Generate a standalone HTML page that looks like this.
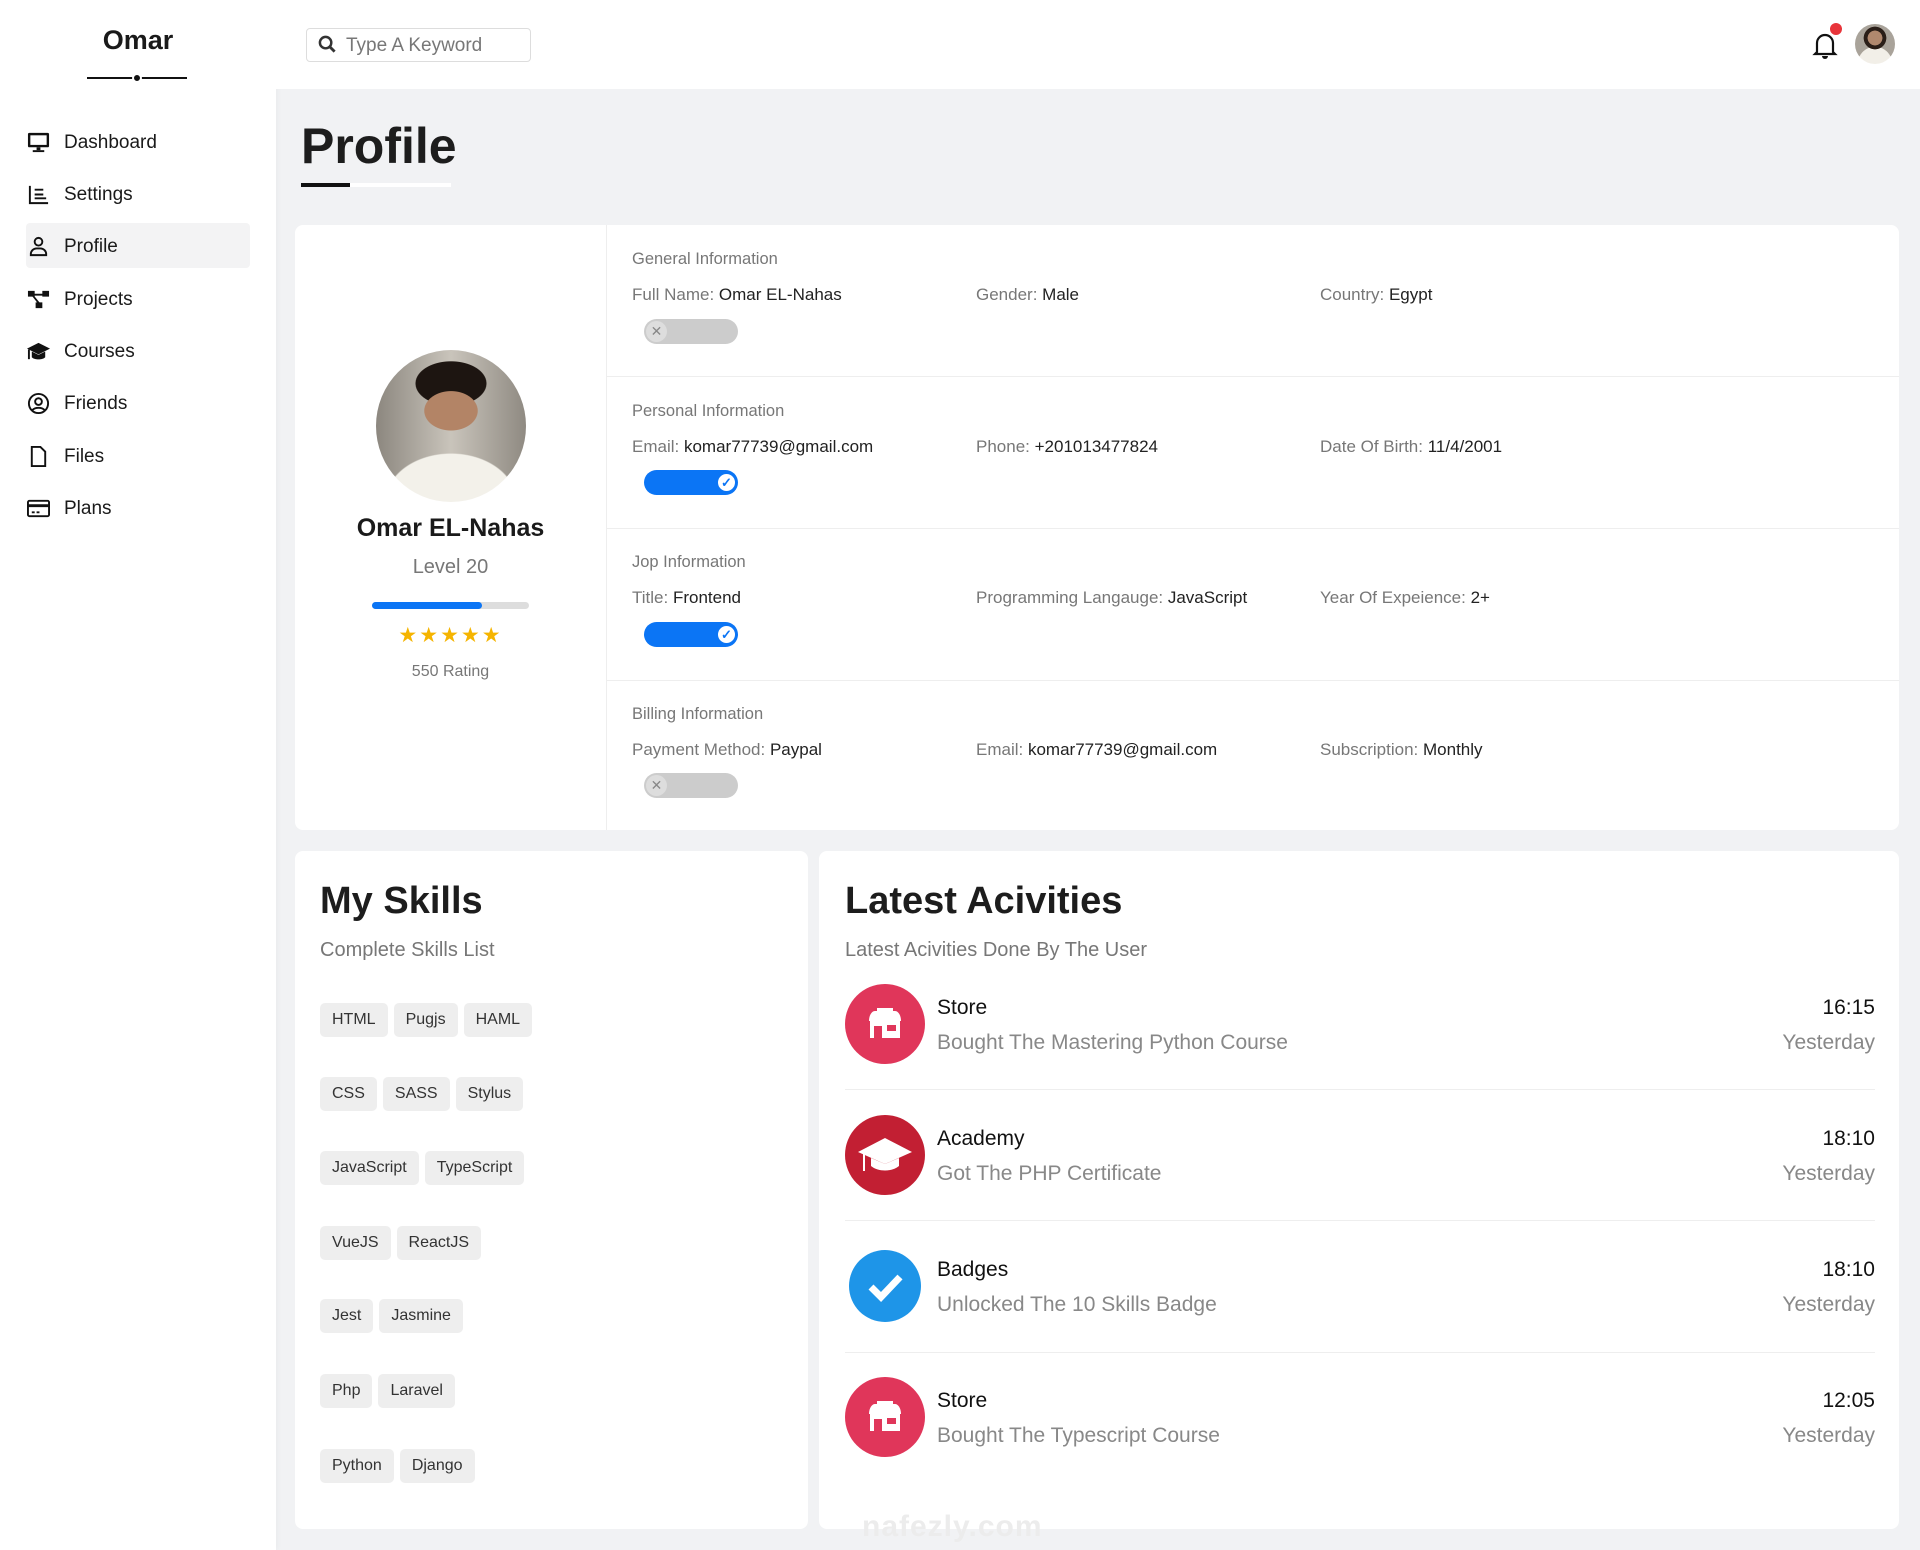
<!DOCTYPE html>
<html><head><meta charset="utf-8">
<style>
*{box-sizing:border-box;margin:0;padding:0}
body{width:1920px;height:1550px;background:#f1f2f4;font-family:"Liberation Sans",sans-serif;color:#1a1a1a;position:relative;overflow:hidden}
.abs{position:absolute}
.side{left:0;top:0;width:276px;height:1550px;background:#fff;box-shadow:1px 0 6px rgba(0,0,0,.04)}
.logo{left:0;width:276px;top:25px;text-align:center;font-size:27px;font-weight:600}
.nav{left:26px;width:224px;height:45px;display:flex;align-items:center;font-size:19px;border-radius:4px;padding-top:2px}
.nav svg{width:23px;height:23px;margin:0 14px 0 1px}
.nav.act{background:#f3f3f4}
.header{left:276px;top:0;width:1644px;height:89px;background:#fff}
.search{left:306px;top:28px;width:225px;height:34px;border:1.5px solid #ddd;border-radius:4px;font-size:19px;color:#777;padding:6px 0 0 39px}
.card{background:#fff;border-radius:8px}
.lbl{color:#777}
.sec{font-size:16.5px;color:#777}
.f{font-size:17px;color:#222}
.tg{width:94px;height:25px;border-radius:13px}
.tg.off{background:#ccc}
.tg.on{background:#0b75f5}
.tag{display:inline-block;background:#eee;border-radius:5px;height:34px;line-height:34px;padding:0 12px;font-size:16px;color:#333;margin-right:6px}
.row{left:320px;height:34px;white-space:nowrap}
.it{left:845px;width:1030px}
.ic{position:absolute;left:0;width:80px;height:80px;border-radius:50%}
.t1{position:absolute;left:92px;font-size:21px;color:#111}
.t2{position:absolute;left:92px;font-size:21px;color:#888}
.r1{position:absolute;right:0;font-size:21px;color:#111}
.r2{position:absolute;right:0;font-size:21px;color:#888}
.hr{height:1px;background:#eee;left:845px;width:1030px}
</style></head><body>
<div class="abs side"></div>
<div class="abs logo">Omar</div>
<div class="abs" style="left:87px;top:77px;width:100px;height:2px;background:#111"></div>
<div class="abs" style="left:132px;top:73px;width:10px;height:10px;border-radius:50%;background:#111;border:2px solid #fff"></div>

<div class="abs nav" style="top:119px"><svg viewBox="0 0 24 24"><rect x="1" y="2" width="22" height="15" rx="1.5" fill="#111"/><rect x="3.5" y="4.5" width="17" height="10" fill="#fff"/><rect x="10" y="17" width="4" height="3" fill="#111"/><rect x="6" y="20" width="12" height="2" fill="#111"/></svg>Dashboard</div>
<div class="abs nav" style="top:171px"><svg viewBox="0 0 24 24" fill="none" stroke="#111" stroke-width="2"><path d="M3 3v18h19M8 7h9M8 12h9M8 16h12"/></svg>Settings</div>
<div class="abs nav act" style="top:223px"><svg viewBox="0 0 24 24" fill="none" stroke="#111" stroke-width="2"><circle cx="12" cy="7" r="4"/><path d="M4 21v-1a6 6 0 0 1 6-6h4a6 6 0 0 1 6 6v1z"/></svg>Profile</div>
<div class="abs nav" style="top:276px"><svg viewBox="0 0 24 24" fill="#111"><rect x="1" y="3" width="7" height="6"/><rect x="16" y="3" width="7" height="6"/><rect x="9" y="15" width="7" height="6"/><path d="M7 6h10v2H7zM5 8l7 9 1.5-1.3L6.5 7z"/></svg>Projects</div>
<div class="abs nav" style="top:328px"><svg viewBox="0 0 24 24" fill="#111"><path d="M12 3L0 9l12 6 12-6z"/><path d="M5 12v6c3 3 11 3 14 0v-6l-7 3.5z"/><rect x="1" y="10" width="2" height="10"/></svg>Courses</div>
<div class="abs nav" style="top:380px"><svg viewBox="0 0 24 24" fill="none" stroke="#111" stroke-width="2"><circle cx="12" cy="12" r="10"/><circle cx="12" cy="10" r="3.5"/><path d="M5.5 19a8 6 0 0 1 13 0"/></svg>Friends</div>
<div class="abs nav" style="top:433px"><svg viewBox="0 0 24 24" fill="none" stroke="#111" stroke-width="2"><path d="M5 2h9l5 5v15H5z"/></svg>Files</div>
<div class="abs nav" style="top:485px"><svg viewBox="0 0 24 24" fill="none" stroke="#111" stroke-width="2"><rect x="1" y="4" width="22" height="16" rx="1.5"/><path d="M1 9h22" stroke-width="3"/><path d="M5 16h3M10 16h3"/></svg>Plans</div>

<div class="abs header"></div>
<div class="abs search">Type A Keyword</div>
<svg class="abs" style="left:318px;top:35px" width="19" height="19" viewBox="0 0 20 20"><circle cx="8" cy="8" r="6" fill="none" stroke="#333" stroke-width="2.6"/><path d="M12.5 12.5l5 5" stroke="#333" stroke-width="3"/></svg>
<svg class="abs" style="left:1812px;top:30px" width="26" height="30" viewBox="0 0 26 30"><path d="M5 22V13a8 8 0 0 1 16 0v9l2 2H3z" fill="none" stroke="#111" stroke-width="2.2"/><path d="M10 26a3 3 0 0 0 6 0z" fill="#111"/></svg>
<div class="abs" style="left:1830px;top:23px;width:12px;height:12px;border-radius:50%;background:#e8343a"></div>
<div class="abs" style="left:1855px;top:24px;width:40px;height:40px;border-radius:50%;background:radial-gradient(circle at 50% 35%,#b0886e 0 22%,#2a1e18 23% 34%,transparent 35%),radial-gradient(circle at 50% 100%,#f2efe8 0 38%,#a9a39a 39%)"></div>

<div class="abs" style="left:301px;top:117px;font-size:50px;font-weight:700;color:#1d1d1d">Profile</div>
<div class="abs" style="left:301px;top:183px;width:150px;height:4px;background:#fff"></div>
<div class="abs" style="left:301px;top:183px;width:49px;height:4px;background:#111"></div>

<div class="abs card" style="left:295px;top:225px;width:1604px;height:605px"></div>
<div class="abs" style="left:606px;top:225px;width:1px;height:605px;background:#eee"></div>
<div class="abs" style="left:376px;top:350px;width:150px;height:152px;border-radius:50%;background:radial-gradient(ellipse 22% 16% at 50% 40%,#b38466 0 80%,transparent 82%),radial-gradient(ellipse 26% 16% at 50% 22%,#1d1511 0 90%,transparent 92%),radial-gradient(ellipse 48% 35% at 50% 100%,#f3f1ea 0 90%,transparent 92%),linear-gradient(90deg,#8c877f,#c9c4bb 50%,#8f8a82)"></div>
<div class="abs" style="left:295px;top:514px;width:311px;text-align:center;font-size:25px;font-weight:600">Omar EL-Nahas</div>
<div class="abs" style="left:295px;top:556px;width:311px;text-align:center;font-size:20px;color:#777">Level 20</div>
<div class="abs" style="left:372px;top:602px;width:157px;height:7px;border-radius:4px;background:#ddd"></div>
<div class="abs" style="left:372px;top:602px;width:110px;height:7px;border-radius:4px;background:#0b75f5"></div>
<div class="abs" style="left:295px;top:623px;width:311px;text-align:center;font-size:21px;color:#f5b400;letter-spacing:2px">★★★★★</div>
<div class="abs" style="left:295px;top:663px;width:311px;text-align:center;font-size:16px;color:#777">550 Rating</div>

<div class="abs hr" style="left:607px;width:1292px;top:376px"></div>
<div class="abs hr" style="left:607px;width:1292px;top:528px"></div>
<div class="abs hr" style="left:607px;width:1292px;top:680px"></div>

<div class="abs sec" style="left:632px;top:250px">General Information</div>
<div class="abs f" style="left:632px;top:285px"><span class="lbl">Full Name:</span> Omar EL-Nahas</div>
<div class="abs f" style="left:976px;top:285px"><span class="lbl">Gender:</span> Male</div>
<div class="abs f" style="left:1320px;top:285px"><span class="lbl">Country:</span> Egypt</div>
<div class="abs tg off" style="left:644px;top:319px"></div>
<div class="abs" style="left:646px;top:321px;width:21px;height:21px;border-radius:50%;background:#ddd;color:#888;font-size:14px;text-align:center;line-height:21px">✕</div>

<div class="abs sec" style="left:632px;top:402px">Personal Information</div>
<div class="abs f" style="left:632px;top:437px"><span class="lbl">Email:</span> komar77739@gmail.com</div>
<div class="abs f" style="left:976px;top:437px"><span class="lbl">Phone:</span> +201013477824</div>
<div class="abs f" style="left:1320px;top:437px"><span class="lbl">Date Of Birth:</span> 11/4/2001</div>
<div class="abs tg on" style="left:644px;top:470px"></div>
<div class="abs" style="left:716px;top:472px;width:21px;height:21px;border-radius:50%;background:#fff;border:2px solid #0b75f5;color:#0b75f5;font-size:13px;text-align:center;line-height:17px;font-weight:700">✓</div>

<div class="abs sec" style="left:632px;top:553px">Jop Information</div>
<div class="abs f" style="left:632px;top:588px"><span class="lbl">Title:</span> Frontend</div>
<div class="abs f" style="left:976px;top:588px"><span class="lbl">Programming Langauge:</span> JavaScript</div>
<div class="abs f" style="left:1320px;top:588px"><span class="lbl">Year Of Expeience:</span> 2+</div>
<div class="abs tg on" style="left:644px;top:622px"></div>
<div class="abs" style="left:716px;top:624px;width:21px;height:21px;border-radius:50%;background:#fff;border:2px solid #0b75f5;color:#0b75f5;font-size:13px;text-align:center;line-height:17px;font-weight:700">✓</div>

<div class="abs sec" style="left:632px;top:705px">Billing Information</div>
<div class="abs f" style="left:632px;top:740px"><span class="lbl">Payment Method:</span> Paypal</div>
<div class="abs f" style="left:976px;top:740px"><span class="lbl">Email:</span> komar77739@gmail.com</div>
<div class="abs f" style="left:1320px;top:740px"><span class="lbl">Subscription:</span> Monthly</div>
<div class="abs tg off" style="left:644px;top:773px"></div>
<div class="abs" style="left:646px;top:775px;width:21px;height:21px;border-radius:50%;background:#ddd;color:#888;font-size:14px;text-align:center;line-height:21px">✕</div>

<div class="abs card" style="left:295px;top:851px;width:513px;height:678px"></div>
<div class="abs" style="left:320px;top:880px;font-size:38px;font-weight:700;color:#1d1d1d">My Skills</div>
<div class="abs" style="left:320px;top:939px;font-size:20px;color:#777">Complete Skills List</div>
<div class="abs row" style="top:1003px"><span class="tag">HTML</span><span class="tag">Pugjs</span><span class="tag">HAML</span></div>
<div class="abs row" style="top:1077px"><span class="tag">CSS</span><span class="tag">SASS</span><span class="tag">Stylus</span></div>
<div class="abs row" style="top:1151px"><span class="tag">JavaScript</span><span class="tag">TypeScript</span></div>
<div class="abs row" style="top:1226px"><span class="tag">VueJS</span><span class="tag">ReactJS</span></div>
<div class="abs row" style="top:1299px"><span class="tag">Jest</span><span class="tag">Jasmine</span></div>
<div class="abs row" style="top:1374px"><span class="tag">Php</span><span class="tag">Laravel</span></div>
<div class="abs row" style="top:1449px"><span class="tag">Python</span><span class="tag">Django</span></div>

<div class="abs card" style="left:819px;top:851px;width:1080px;height:678px"></div>
<div class="abs" style="left:845px;top:880px;font-size:38px;font-weight:700;color:#1d1d1d">Latest Acivities</div>
<div class="abs" style="left:845px;top:939px;font-size:20px;color:#777">Latest Acivities Done By The User</div>

<div class="abs it" style="top:984px;height:80px">
 <div class="ic" style="background:#e0365a"><svg width="80" height="80" viewBox="0 0 80 80"><path d="M25 36v18h30V36z" fill="#fff"/><rect x="29" y="42" width="8" height="12" fill="#e0365a"/><rect x="42" y="41" width="9" height="6" fill="#e0365a"/><path d="M24 37c0-6 3-10 6-10h20c3 0 6 4 6 10z" fill="#fff"/><rect x="32" y="24" width="16" height="4" fill="#fff"/></svg></div>
 <div class="t1" style="top:12px">Store</div><div class="t2" style="top:47px">Bought The Mastering Python Course</div>
 <div class="r1" style="top:12px">16:15</div><div class="r2" style="top:47px">Yesterday</div>
</div>
<div class="abs hr" style="top:1089px"></div>
<div class="abs it" style="top:1115px;height:80px">
 <div class="ic" style="background:#c21f33"><svg width="80" height="80" viewBox="0 0 80 80"><path d="M13 37l27-14 27 14-27 12z" fill="#fff"/><path d="M26 43v8c7 6 21 6 28 0v-8l-14 6z" fill="#fff"/><rect x="18" y="38" width="2" height="18" fill="#fff"/></svg></div>
 <div class="t1" style="top:12px">Academy</div><div class="t2" style="top:47px">Got The PHP Certificate</div>
 <div class="r1" style="top:12px">18:10</div><div class="r2" style="top:47px">Yesterday</div>
</div>
<div class="abs hr" style="top:1220px"></div>
<div class="abs it" style="top:1246px;height:80px">
 <div class="ic" style="background:#1e95e8;width:72px;height:72px;left:4px;top:4px"><svg width="72" height="72" viewBox="0 0 72 72"><path d="M22 37l10 10 19-20" fill="none" stroke="#fff" stroke-width="7"/></svg></div>
 <div class="t1" style="top:12px">Badges</div><div class="t2" style="top:47px">Unlocked The 10 Skills Badge</div>
 <div class="r1" style="top:12px">18:10</div><div class="r2" style="top:47px">Yesterday</div>
</div>
<div class="abs hr" style="top:1352px"></div>
<div class="abs it" style="top:1377px;height:80px">
 <div class="ic" style="background:#e0365a"><svg width="80" height="80" viewBox="0 0 80 80"><path d="M25 36v18h30V36z" fill="#fff"/><rect x="29" y="42" width="8" height="12" fill="#e0365a"/><rect x="42" y="41" width="9" height="6" fill="#e0365a"/><path d="M24 37c0-6 3-10 6-10h20c3 0 6 4 6 10z" fill="#fff"/><rect x="32" y="24" width="16" height="4" fill="#fff"/></svg></div>
 <div class="t1" style="top:12px">Store</div><div class="t2" style="top:47px">Bought The Typescript Course</div>
 <div class="r1" style="top:12px">12:05</div><div class="r2" style="top:47px">Yesterday</div>
</div>
<div class="abs" style="left:862px;top:1510px;font-size:30px;font-weight:700;color:#ececec;letter-spacing:1px">nafezly.com</div>
</body></html>
